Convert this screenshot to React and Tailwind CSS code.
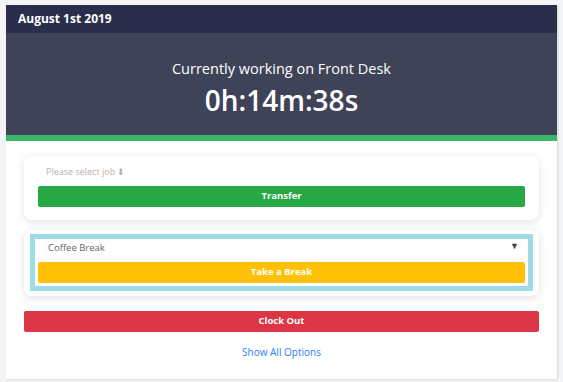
import React from "react";

export default function App() {
  return (
    <div className="w-[563px] h-[382px] bg-[#f3f4f6] pt-[5px] pl-[6px]" style={{ fontFamily: '"Open Sans", sans-serif' }}>
      <div className="w-[551px] h-[374px] bg-white shadow-[1px_1px_2px_rgba(0,0,0,0.12)] flex flex-col">
        <div className="h-[28px] bg-[#2a2e4a] flex items-center pl-[12px] text-white font-bold text-[12px]">
          August 1st 2019
        </div>
        <div className="h-[102px] bg-[#3e4358] flex flex-col items-center pt-[27px] text-white">
          <div className="text-[14.5px] leading-[18px]">Currently working on Front Desk</div>
          <div className="mt-[2px] text-[28px] leading-[40px] font-semibold">0h:14m:38s</div>
        </div>
        <div className="h-[6px] bg-[#3cb46a]" />
        <div className="px-[18px] pt-[15px] flex flex-col">
          <div className="rounded-[8px] bg-white shadow-[0_2px_8px_rgba(0,0,0,0.12)] px-[14px] pt-[9px] pb-[13px]">
            <div className="text-[9px] text-[#b8b0ab] pl-[8px] h-[21px] leading-[14px]">Please select job ⬇</div>
            <button className="block w-full h-[21px] rounded-[2px] bg-[#28a745] text-white text-[9.5px] font-bold">Transfer</button>
          </div>
          <div className="mt-[10px] rounded-[8px] bg-white shadow-[0_2px_8px_rgba(0,0,0,0.12)] px-[6px] pt-[4px] pb-[5px]">
            <div className="border-[5px] border-[#9fdbe9] px-[3px] pt-[1px] pb-[3px]">
              <div className="h-[22px] flex items-start justify-between pl-[10px] pr-[6px] pt-[1px] text-[9.5px] leading-[13px] text-[#666]">
                <span>Coffee Break</span>
                <span className="text-[9px] leading-[10px] text-[#444]">▼</span>
              </div>
              <button className="block w-full h-[21px] rounded-[2px] bg-[#ffc107] text-white text-[9.5px] font-bold">Take a Break</button>
            </div>
          </div>
          <button className="block mt-[15px] w-full h-[21px] rounded-[2px] bg-[#dc3545] text-white text-[9.5px] font-bold">Clock Out</button>
          <div className="mt-[13px] text-center text-[10px] text-[#2a7fff]">Show All Options</div>
        </div>
      </div>
    </div>
  );
}
